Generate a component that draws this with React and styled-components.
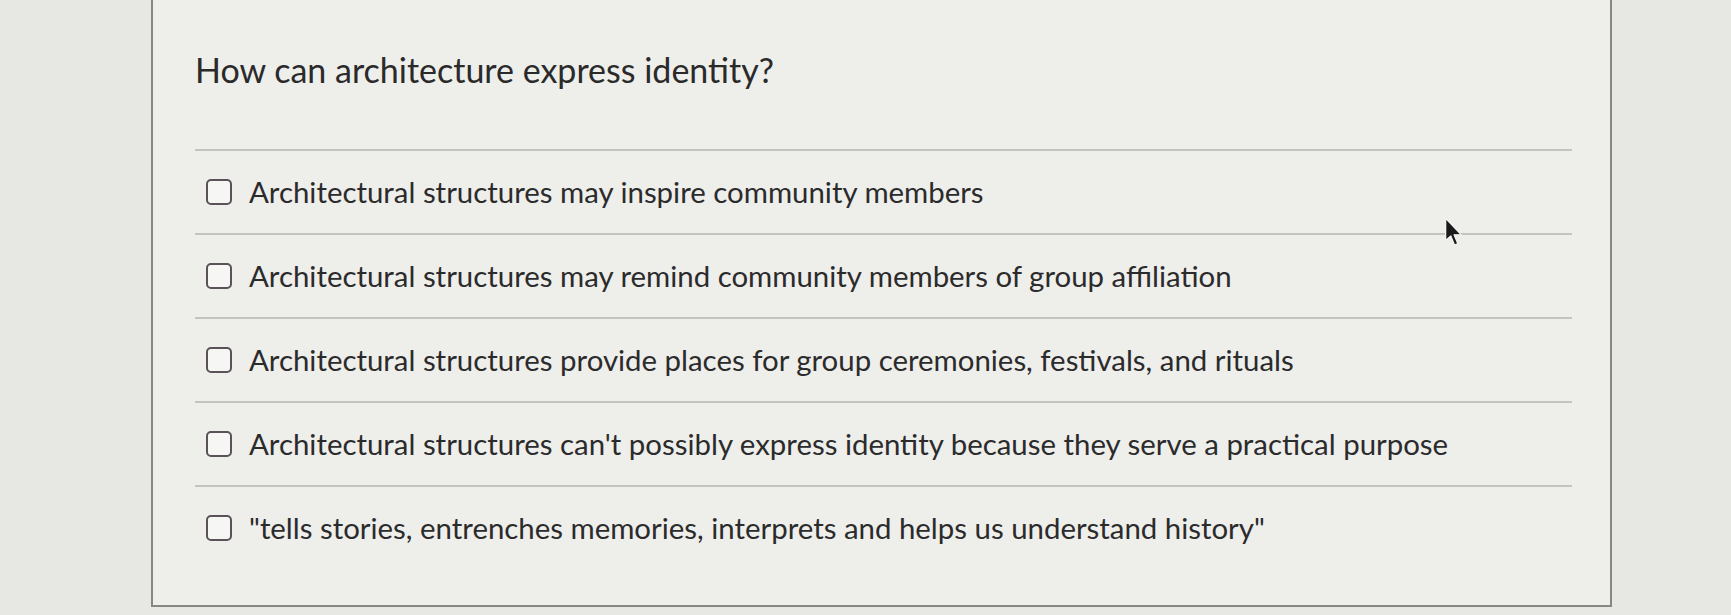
import React from "react";
import styled, { createGlobalStyle } from "styled-components";

const options = [
  "Architectural structures may inspire community members",
  "Architectural structures may remind community members of group affiliation",
  "Architectural structures provide places for group ceremonies, festivals, and rituals",
  "Architectural structures can't possibly express identity because they serve a practical purpose",
  "\"tells stories, entrenches memories, interprets and helps us understand history\"",
];

const App = () => {
  return (
    <>
      <GlobalStyle />
      <Page>
        <Card>
          <Question>How can architecture express identity?</Question>
          <OptionList>
            {options.map((text) => (
              <Option key={text}>
                <Box type="checkbox" />
                <Label>{text}</Label>
              </Option>
            ))}
          </OptionList>
        </Card>
        <Pointer viewBox="0 0 13 21" width="19" height="30">
          <path
            d="M1 1 L1 16.5 L4.6 13.3 L7.2 19.6 L9.5 18.6 L6.9 12.5 L11.8 12.3 Z"
            fill="#1a1a1a"
            stroke="#f4f4f4"
            strokeWidth="0.9"
            strokeLinejoin="round"
          />
        </Pointer>
      </Page>
    </>
  );
};

export default App;

const GlobalStyle = createGlobalStyle`
  body {
    margin: 0;
    background: #e7e7e4;
    font-family: Lato, "Noto Sans", sans-serif;
    color: #2b2b2b;
  }
`;

const Page = styled.div`
  position: relative;
  height: 615px;
  overflow: hidden;
  padding-left: 151px;
`;

const Card = styled.div`
  width: 1461px;
  height: 607px;
  box-sizing: border-box;
  padding: 0 38px 0 42px;
  background: #eeeeeb;
  border: 2px solid #868684;
  border-top: none;
`;

const Question = styled.h1`
  margin: 0;
  padding-top: 50px;
  height: 149px;
  box-sizing: border-box;
  font-size: 34px;
  font-weight: 400;
  line-height: 40px;
  color: #2a2a2a;
`;

const OptionList = styled.div`
  display: flex;
  flex-direction: column;
`;

const Option = styled.label`
  display: flex;
  align-items: center;
  gap: 17px;
  height: 84px;
  padding-left: 11px;
  border-top: 2px solid #c3c3c0;
  box-sizing: border-box;
`;

const Box = styled.input`
  appearance: none;
  margin: 0;
  width: 26px;
  height: 26px;
  border: 2px solid #5a5258;
  border-radius: 5px;
  background: #f6f6f4;
  box-sizing: border-box;
  flex-shrink: 0;
`;

const Label = styled.span`
  font-size: 29.4px;
  line-height: 36px;
  color: #2b2b2b;
`;

const Pointer = styled.svg`
  position: absolute;
  left: 1444px;
  top: 217px;
`;
